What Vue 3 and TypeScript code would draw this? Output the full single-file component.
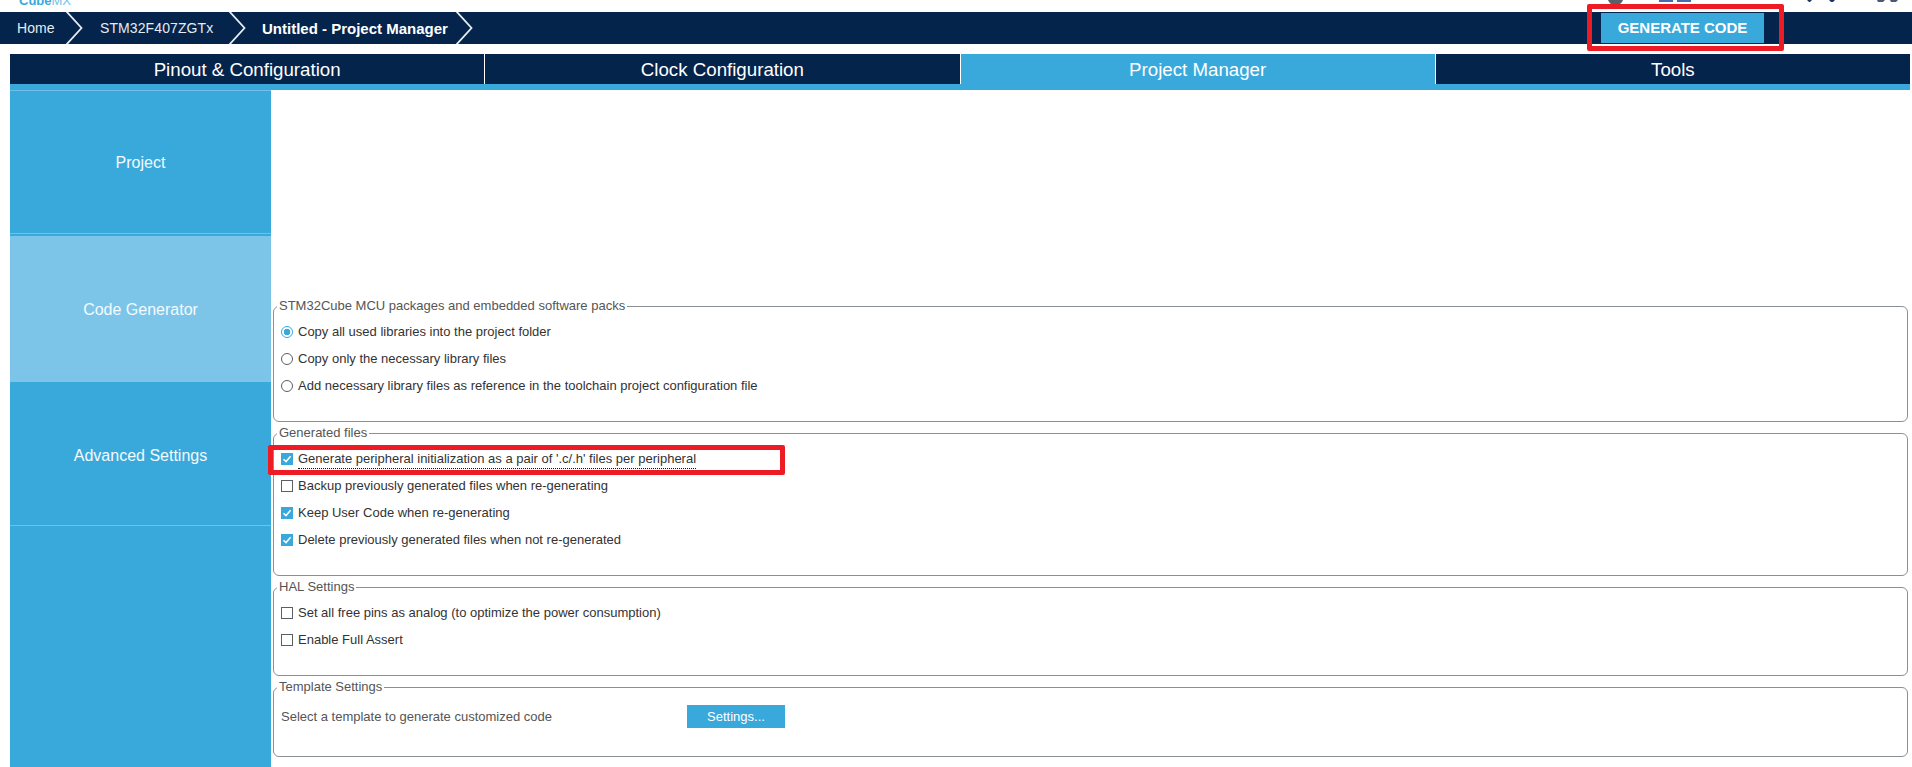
<script setup lang="ts">
interface Option {
  label: string
  checked: boolean
  dotted?: boolean
}

interface Crumb {
  label: string
  width: number
  current?: boolean
}

const crumbs: Crumb[] = [
  { label: 'Home', width: 66 },
  { label: 'STM32F407ZGTx', width: 163 },
  { label: 'Untitled - Project Manager', width: 227, current: true },
]

const tabs: string[] = ['Pinout & Configuration', 'Clock Configuration', 'Project Manager', 'Tools']

const sideItems = [
  { label: 'Project', cls: 'side-project' },
  { label: 'Code Generator', cls: 'side-code' },
  { label: 'Advanced Settings', cls: 'side-advanced' },
]

const packOptions: Option[] = [
  { label: 'Copy all used libraries into the project folder', checked: true },
  { label: 'Copy only the necessary library files', checked: false },
  { label: 'Add necessary library files as reference in the toolchain project configuration file', checked: false },
]

const fileOptions: Option[] = [
  { label: "Generate peripheral initialization as a pair of '.c/.h' files per peripheral", checked: true, dotted: true },
  { label: 'Backup previously generated files when re-generating', checked: false },
  { label: 'Keep User Code when re-generating', checked: true },
  { label: 'Delete previously generated files when not re-generated', checked: true },
]

const halOptions: Option[] = [
  { label: 'Set all free pins as analog (to optimize the power consumption)', checked: false },
  { label: 'Enable Full Assert', checked: false },
]

const checkGroups = [
  { title: 'Generated files', options: fileOptions, cls: 'group-files' },
  { title: 'HAL Settings', options: halOptions, cls: 'group-hal' },
]
</script>

<template>
  <div class="page">
    <div class="top-strip">
      <div class="logo"><b>Cube</b>MX</div>
      <svg class="top-icons" width="352" height="12" viewBox="0 0 352 12" aria-hidden="true">
        <path d="M48 0a8 8 0 0 0 15 0z" fill="#5a6068" />
        <rect x="99" y="0" width="14" height="2" fill="#4a6ab0" />
        <rect x="117" y="0" width="14" height="2" fill="#4a6ab0" />
        <path d="M247 0h5l-2 2h-1z M269 0h6l-2 2h-2z" fill="#1c3560" />
        <path d="M317 0h8l-2 2h-5z M330 0h8l-2 2h-5z" fill="#4a5a70" />
      </svg>
    </div>

    <header class="nav">
      <div
        v-for="crumb in crumbs"
        :key="crumb.label"
        class="crumb"
        :class="{ current: crumb.current }"
        :style="{ width: crumb.width + 'px' }"
      >
        <span>{{ crumb.label }}</span>
        <svg class="chevron" width="18" height="32" viewBox="0 0 18 32" aria-hidden="true">
          <path d="M1 -1L16.5 16L1 33" fill="none" stroke="#e8edf2" stroke-width="1.8" />
        </svg>
      </div>
      <button class="generate" type="button">GENERATE CODE</button>
    </header>

    <nav class="tabs">
      <div v-for="tab in tabs" :key="tab" class="tab" :class="{ active: tab === 'Project Manager' }">{{ tab }}</div>
    </nav>
    <div class="tab-strip"></div>

    <main class="body">
      <aside class="side">
        <div v-for="item in sideItems" :key="item.label" class="side-item" :class="item.cls">{{ item.label }}</div>
        <div class="side-rest"></div>
      </aside>

      <section class="content">
        <fieldset class="group group-packs">
          <legend>STM32Cube MCU packages and embedded software packs</legend>
          <div v-for="option in packOptions" :key="option.label" class="row">
            <span class="radio" :class="{ on: option.checked }"></span>
            <span>{{ option.label }}</span>
          </div>
        </fieldset>

        <fieldset v-for="group in checkGroups" :key="group.title" class="group" :class="group.cls">
          <legend>{{ group.title }}</legend>
          <div v-for="option in group.options" :key="option.label" class="row">
            <span class="check" :class="{ on: option.checked }">
              <svg v-if="option.checked" width="12" height="12" viewBox="0 0 12 12" aria-hidden="true">
                <path d="M2.5 6.2L5 8.6L9.6 3.2" fill="none" stroke="#fff" stroke-width="1.5" />
              </svg>
            </span>
            <span :class="{ dotted: option.dotted }">{{ option.label }}</span>
          </div>
        </fieldset>

        <fieldset class="group group-template">
          <legend>Template Settings</legend>
          <div class="template-row">
            <span class="template-label">Select a template to generate customized code</span>
            <button class="settings" type="button">Settings...</button>
          </div>
        </fieldset>
      </section>
    </main>

    <div class="mark mark-generate"></div>
    <div class="mark mark-peripheral"></div>
  </div>
</template>

<style>
html,
body {
  margin: 0;
  background: #fff;
  overflow: hidden;
}
</style>

<style scoped>
.page {
  position: relative;
  width: 1912px;
  height: 767px;
  overflow: hidden;
  background: #fff;
  font-family: 'Liberation Sans', Arial, sans-serif;
  color: #333;
}

.top-strip {
  display: flex;
  justify-content: space-between;
  height: 12px;
  overflow: hidden;
}

.logo {
  margin: -6px 0 0 19px;
  font-size: 13px;
  line-height: 14px;
  color: #6cc3ea;
}

.logo b {
  color: #39a9dc;
}

.top-icons {
  flex: none;
}

.nav {
  display: flex;
  align-items: stretch;
  height: 32px;
  background: #04244c;
  padding-left: 17px;
  color: #e6ebf0;
  font-size: 14px;
}

.crumb {
  display: flex;
  align-items: center;
  justify-content: space-between;
  flex: none;
  letter-spacing: 0.1px;
}

.crumb + .crumb {
  padding-left: 17px;
  box-sizing: border-box;
}

.crumb.current {
  padding-left: 16px;
  font-size: 15px;
  font-weight: 700;
  color: #fff;
  letter-spacing: 0;
}

.chevron {
  flex: none;
}

.generate {
  width: 163px;
  height: 30px;
  margin: 1px 148px 0 auto;
  border: 0;
  padding: 0 0 1px;
  background: #39a9dc;
  color: #fff;
  font: 700 15px 'Liberation Sans', Arial, sans-serif;
}

.tabs {
  display: flex;
  height: 30px;
  margin: 10px 2px 0 10px;
  background: #04244c;
}

.tab {
  display: flex;
  flex: 1;
  align-items: center;
  justify-content: center;
  padding-top: 1px;
  box-sizing: border-box;
  color: #fff;
  font-size: 18.7px;
}

.tab + .tab {
  border-left: 1px solid #fff;
}

.tab.active {
  background: #39a9dc;
}

.tab-strip {
  height: 6px;
  margin: 0 2px 0 10px;
  background: #39a9dc;
}

.body {
  display: flex;
  margin-left: 10px;
  height: 677px;
}

.side {
  display: flex;
  flex: none;
  flex-direction: column;
  width: 261px;
  background: #39a9dc;
  color: #f4fafd;
  font-size: 16px;
}

.side-item {
  display: flex;
  align-items: center;
  justify-content: center;
  box-sizing: border-box;
}

.side-project {
  height: 144px;
  margin-bottom: 2px;
  padding-top: 2px;
  border-top: 1px solid #6fc1ea;
  border-bottom: 1px solid #6fc1ea;
}

.side-code {
  height: 146px;
  padding-top: 1px;
  background: #7cc5e9;
}

.side-advanced {
  height: 144px;
  padding-top: 4px;
  border-bottom: 1px solid #6fc1ea;
}

.side-rest {
  flex: 1;
}

.content {
  flex: 1;
  display: flex;
  flex-direction: column;
  gap: 3px;
  padding: 208px 4px 0 2px;
  font-size: 13px;
  min-width: 0;
}

.group {
  box-sizing: border-box;
  margin: 0;
  padding: 4px 7px 0;
  min-width: 0;
  border: 1px solid #8b9096;
  border-radius: 6px;
}

.group legend {
  margin-left: -4px;
  padding: 0 2px;
  color: #555;
  font-size: 13px;
  line-height: 16px;
}

.group-packs {
  height: 124px;
}

.group-files {
  height: 151px;
}

.group-hal {
  height: 97px;
}

.group-template {
  height: 78px;
}

.row {
  display: flex;
  align-items: center;
  gap: 5px;
  height: 27px;
}

.radio,
.check {
  display: block;
  box-sizing: border-box;
  flex: none;
  width: 12px;
  height: 12px;
  border: 1px solid #5a5f66;
}

.radio {
  border-radius: 50%;
}

.radio.on {
  border-color: #39a9dc;
  background: radial-gradient(circle, #39a9dc 0 3px, #fff 3.6px);
}

.check svg {
  display: block;
  margin: -1px;
}

.check.on {
  border-color: #39a9dc;
  background: #39a9dc;
}

.dotted {
  margin-top: 3px;
  padding-bottom: 2px;
  border-bottom: 1px dotted #111;
  line-height: 15px;
}

.template-row {
  display: flex;
  align-items: center;
  justify-content: space-between;
  width: 504px;
  height: 23px;
  margin-top: 6px;
}

.template-label {
  color: #555;
}

.settings {
  width: 98px;
  height: 23px;
  border: 0;
  padding: 0;
  background: #39a9dc;
  color: #fff;
  font: 13px 'Liberation Sans', Arial, sans-serif;
}

.mark {
  position: absolute;
  box-sizing: border-box;
  border: 5px solid #ed1c24;
  border-radius: 2px;
}

.mark-generate {
  left: 1587px;
  top: 4px;
  width: 197px;
  height: 47px;
}

.mark-peripheral {
  left: 268px;
  top: 445px;
  width: 517px;
  height: 30px;
}
</style>
